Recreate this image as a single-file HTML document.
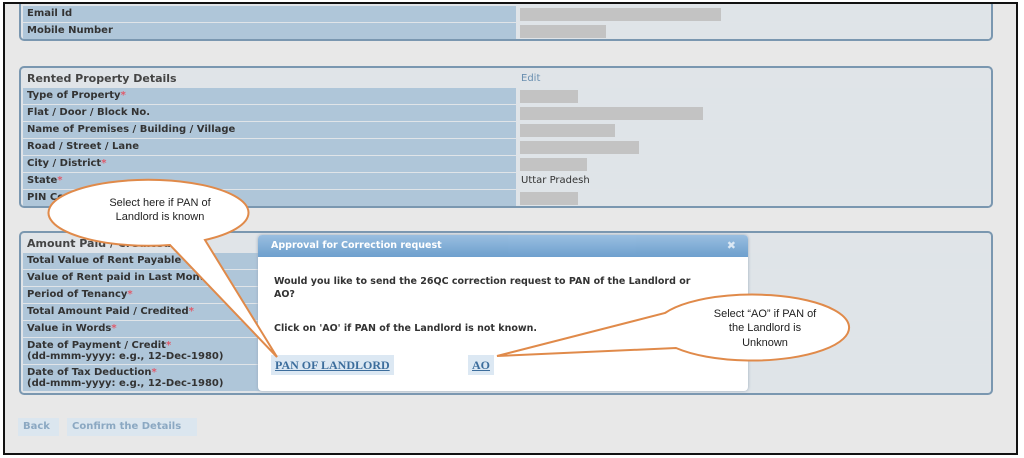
<!DOCTYPE html>
<html><head><meta charset="utf-8"><style>
*{margin:0;padding:0;box-sizing:border-box}
body{width:1024px;height:458px;background:#fff;position:relative;overflow:hidden;font-family:"DejaVu Sans","Liberation Sans",sans-serif}
#frame{position:absolute;left:3px;top:2px;width:1015px;height:453px;border:2px solid #111;background:#e8e8e8;overflow:hidden}
.box{position:absolute;left:14px;width:974px;border:2px solid #7a97b0;border-radius:5px;background:#e0e4e8}
.r{position:absolute;left:2px;width:966px;height:16px}
.l{position:absolute;left:0;width:493px;height:100%;background:#afc6d9;font-size:10px;font-weight:bold;color:#333;padding-left:4px;line-height:16px;white-space:nowrap;overflow:hidden}
.l.h{background:transparent;color:#444;font-size:11px}
.v{position:absolute;left:495px;right:0;height:100%;background:#dfe4e8;font-size:10px;color:#333;line-height:16px;padding-left:3px}
.g{position:absolute;background:#c3c3c3;height:13px;top:2px;left:2px}
.s{color:#e05a6a}
.two{line-height:11px;padding-top:2px}
.btn{position:absolute;top:414px;height:18px;background:#dbe6ef;color:#8ba8c2;font-size:10px;font-weight:bold;line-height:18px;padding:0 5px}
#dlg{position:absolute;left:253px;top:231px;width:490px;height:156px;background:#fff;border-radius:4px;box-shadow:0 0 3px #9ab}
#dh{height:22px;background:linear-gradient(#8fb8de,#5e95c8);border-radius:4px 4px 0 0;color:#fff;font-size:9.5px;font-weight:bold;line-height:22px;padding-left:13px;opacity:.9}
#dh span{position:absolute;right:12px;color:#d8e6f3;font-size:11px}
.dt{position:absolute;left:16px;font-size:9.5px;font-weight:bold;color:#333;line-height:13px}
.db{position:absolute;top:120px;height:20px;background:#dce8f3;font-size:12px;font-weight:bold;color:#3c6d9c;line-height:20px;padding:0 4px;text-decoration:underline;font-family:"Liberation Serif",serif}
</style></head><body>
<div id="frame">
<div class="box" style="top:-4px;height:41px">
 <div class="r" style="top:4px"><div class="l">Email Id</div><div class="v"><div class="g" style="width:201px"></div></div></div>
 <div class="r" style="top:21px"><div class="l">Mobile Number</div><div class="v"><div class="g" style="width:86px"></div></div></div>
</div>
<div class="box" style="top:62px;height:142px">
 <div class="r" style="top:3px"><div class="l h">Rented Property Details</div><div class="v" style="background:transparent;color:#6a8fb0">Edit</div></div>
 <div class="r" style="top:20px"><div class="l">Type of Property<span class="s">*</span></div><div class="v"><div class="g" style="width:58px"></div></div></div>
 <div class="r" style="top:37px"><div class="l">Flat / Door / Block No.</div><div class="v"><div class="g" style="width:183px"></div></div></div>
 <div class="r" style="top:54px"><div class="l">Name of Premises / Building / Village</div><div class="v"><div class="g" style="width:95px"></div></div></div>
 <div class="r" style="top:71px"><div class="l">Road / Street / Lane</div><div class="v"><div class="g" style="width:119px"></div></div></div>
 <div class="r" style="top:88px"><div class="l">City / District<span class="s">*</span></div><div class="v"><div class="g" style="width:67px"></div></div></div>
 <div class="r" style="top:105px"><div class="l">State<span class="s">*</span></div><div class="v">Uttar Pradesh</div></div>
 <div class="r" style="top:122px"><div class="l">PIN Code</div><div class="v"><div class="g" style="width:58px"></div></div></div>
</div>
<div class="box" style="top:227px;height:164px">
 <div class="r" style="top:3px"><div class="l h">Amount Paid / Credited</div><div class="v" style="background:transparent"></div></div>
 <div class="r" style="top:20px"><div class="l">Total Value of Rent Payable</div><div class="v"></div></div>
 <div class="r" style="top:37px"><div class="l">Value of Rent paid in Last Month<span class="s">*</span></div><div class="v"></div></div>
 <div class="r" style="top:54px"><div class="l">Period of Tenancy<span class="s">*</span></div><div class="v"></div></div>
 <div class="r" style="top:71px"><div class="l">Total Amount Paid / Credited<span class="s">*</span></div><div class="v"></div></div>
 <div class="r" style="top:88px"><div class="l">Value in Words<span class="s">*</span></div><div class="v"></div></div>
 <div class="r" style="top:105px;height:26px"><div class="l two">Date of Payment / Credit<span class="s">*</span><br>(dd-mmm-yyyy: e.g., 12-Dec-1980)</div><div class="v"></div></div>
 <div class="r" style="top:132px;height:26px"><div class="l two">Date of Tax Deduction<span class="s">*</span><br>(dd-mmm-yyyy: e.g., 12-Dec-1980)</div><div class="v"></div></div>
</div>
<div class="btn" style="left:13px;width:41px">Back</div>
<div class="btn" style="left:62px;width:130px">Confirm the Details</div>
<div id="dlg">
 <div id="dh">Approval for Correction request<span>✖</span></div>
 <div class="dt" style="top:40px">Would you like to send the 26QC correction request to PAN of the Landlord or<br>AO?</div>
 <div class="dt" style="top:87px">Click on 'AO' if PAN of the Landlord is not known.</div>
 <div class="db" style="left:13px">PAN OF LANDLORD</div>
 <div class="db" style="left:210px">AO</div>
</div>
</div>
<svg style="position:absolute;left:0;top:0" width="1024" height="458">
 <path d="M205 240 L277 357 L170 245 A100 33 0 1 1 205 240 Z" fill="#fff" stroke="#e08a4a" stroke-width="2"/>
 <path d="M676 348 L497 356 L665 313 A97 33 0 1 1 676 348 Z" fill="#fff" stroke="#e08a4a" stroke-width="2"/>
 <g font-family="Liberation Sans, sans-serif" font-size="11" fill="#222" text-anchor="middle">
  <text x="160" y="206">Select here if PAN of</text>
  <text x="160" y="220">Landlord is  known</text>
  <text x="765" y="317">Select  “AO” if  PAN of</text>
  <text x="765" y="331">the Landlord is</text>
  <text x="765" y="346">Unknown</text>
 </g>
</svg>
</body></html>
